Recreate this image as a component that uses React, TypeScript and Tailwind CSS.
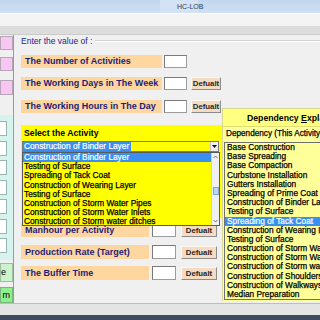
const activities = [
  'Construction of Binder Layer',
  'Testing of Surface',
  'Spreading of Tack Coat',
  'Construction of Wearing Layer',
  'Testing of Surface',
  'Construction of Storm Water Pipes',
  'Construction of Storm Water Inlets',
  'Construction of Storm water ditches',
];

const dependencies = [
  'Base Construction',
  'Base Spreading',
  'Base Compaction',
  'Curbstone Installation',
  'Gutters Installation',
  'Spreading of Prime Coat',
  'Construction of Binder Layer',
  'Testing of Surface',
  'Spreading of Tack Coat',
  'Construction of Wearing Layer',
  'Testing of Surface',
  'Construction of Storm Water Pipes',
  'Construction of Storm Water Inlets',
  'Construction of Storm water ditches',
  'Construction of Shoulders',
  'Construction of Walkways',
  'Median Preparation',
];

function TextBox({ className }: { className: string }) {
  return <div className={`${className} bg-white border border-[#9c9c9c] border-t-[#7a7a7a] border-l-[#7a7a7a]`} />;
}

function DefaultButton({ className }: { className: string }) {
  return (
    <div
      className={`${className} flex items-center justify-center bg-[#f3dcc3] border border-[#fff7ee] border-b-[#8c8c8c] border-r-[#8c8c8c] text-[7.8px] font-bold text-[#262626] leading-none`}
    >
      Defualt
    </div>
  );
}

function LabelRow({ text, hasButton = true }: { text: string; hasButton?: boolean }) {
  return (
    <div className="h-[13px] flex">
      <div className="w-[141px] bg-[#fdd6a0] pl-[4px] text-[9px] font-bold leading-[13px] text-[#1d1d77] whitespace-nowrap">
        {text}
      </div>
      <TextBox className="ml-[2px] w-[23px]" />
      {hasButton && <DefaultButton className="ml-[4px] w-[30px]" />}
    </div>
  );
}

function LowerRow({ text }: { text: string }) {
  return (
    <div className="h-[14px] flex">
      <div className="w-[128px] bg-[#fdd6a0] pl-[4px] text-[9px] font-bold leading-[14px] text-[#1d1d77] whitespace-nowrap">
        {text}
      </div>
      <TextBox className="ml-[3px] w-[24px]" />
      <DefaultButton className="ml-[5px] w-[36px] h-[13px] mt-[1px]" />
    </div>
  );
}

function LeftStrip() {
  return (
    <div className="w-[14px] border-r border-[#9a9a9a] flex flex-col">
      <div className="mt-[1px] h-[14px] w-[13px] bg-[#f7c6f3] border border-[#b7a6b7]" />
      <div className="mt-[7px] h-[14px] w-[13px] bg-[#f7c6f3] border border-[#b7a6b7]" />
      <div className="mt-[9px] h-[15px] w-[13px] bg-[#f7c6f3] border border-[#b7a6b7]" />
      <div className="mt-[20px] h-[145px] bg-[#d6f3ee] flex flex-col pt-[6px] gap-[4.5px]">
        {[0, 1, 2, 3, 4, 5, 6].map((i) => (
          <div key={i} className="h-[15px] w-[7px] bg-white border border-l-0 border-[#9cb4b0]" />
        ))}
      </div>
      <div className="mt-[3px] h-[19px] w-[13px] bg-[#cdf3cd] border border-[#9bbf9b] flex items-center justify-end overflow-hidden whitespace-nowrap text-[9px] leading-none pr-[6px]">
        e
      </div>
      <div className="mt-[5px] h-[16px] w-[13px] bg-[#8eef8e] border border-[#79b679] flex items-center justify-end overflow-hidden whitespace-nowrap text-[9px] leading-none pr-[2px]">
        m
      </div>
    </div>
  );
}

function ActivitySelect() {
  return (
    <div className="relative mt-[12px] h-[93px] bg-[#ffff00] pt-[3px]">
      <div className="pl-[3px] text-[8.7px] font-bold leading-[10px] text-black">Select the Activity</div>
      <div className="mt-[3px] ml-[1px] w-[197px] h-[11px] border border-[#7a7a7a] flex items-center">
        <div className="flex-1 h-full flex items-center">
          <span className="bg-[#3a8ff0] text-white text-[8.3px] leading-[9px] pl-[1px] pr-[2px] whitespace-nowrap [-webkit-text-stroke:0.2px_white]">
            Construction of Binder Layer
          </span>
        </div>
        <div className="w-[8px] h-full bg-[#f0f0f0] border-l border-[#c8c8c8] flex items-center justify-center">
          <svg width="5" height="3" viewBox="0 0 5 3">
            <path d="M0 0h5L2.5 3z" fill="#111" />
          </svg>
        </div>
      </div>
      <div className="absolute left-[1px] top-[27px] w-[198px] h-[74px] bg-[#ffff00] border border-[#5a5a5a] flex z-10">
        <div className="flex-1 overflow-hidden">
          {activities.map((a, i) => (
            <div
              key={i}
              className={`h-[9.2px] pl-[1px] text-[8.3px] leading-[9.2px] whitespace-nowrap ${
                i === 0
                  ? 'bg-[#3a8ff0] text-white [-webkit-text-stroke:0.2px_white]'
                  : 'text-black [-webkit-text-stroke:0.25px_black]'
              }`}
            >
              {a}
            </div>
          ))}
        </div>
        <div className="w-[8px] bg-[#eef0f2] border-l border-[#d0d0d0] flex flex-col items-center">
          <svg width="5" height="6" viewBox="0 0 5 6" className="mt-[1px]">
            <path d="M0.5 4L2.5 2L4.5 4" stroke="#777" fill="none" />
          </svg>
          <div className="mt-[27px] w-[6px] h-[8px] bg-[#bcd6f2] border border-[#7ea6d6]" />
          <div className="flex-1" />
          <svg width="5" height="6" viewBox="0 0 5 6" className="mb-[1px]">
            <path d="M0.5 2L2.5 4L4.5 2" stroke="#777" fill="none" />
          </svg>
        </div>
      </div>
    </div>
  );
}

function DependencyPanel() {
  return (
    <div className="mt-[62px] w-[98px] h-[193px] overflow-hidden bg-[#ffffa0] border-l border-t border-[#d8d890]">
      <div className="w-[160px] h-[18px] bg-[#ffff80] border-b border-[#e0e070] pl-[24px] text-[8.7px] font-bold leading-[18px] text-black whitespace-nowrap">
        Dependency <span className="underline">E</span>xplanation
      </div>
      <div className="pl-[3px] mt-[2px] text-[8.2px] leading-[10px] text-black whitespace-nowrap [-webkit-text-stroke:0.25px_black]">
        Dependency (This Activity Depends On)
      </div>
      <div className="ml-[1px] mt-[3px] w-[140px] h-[158px] bg-[#ffff99] border border-[#707070] overflow-hidden">
        {dependencies.map((d, i) => (
          <div
            key={i}
            className={`h-[9.2px] pl-[2px] text-[8.3px] leading-[9.2px] whitespace-nowrap ${
              i === 8
                ? 'bg-[#3a8ff0] text-white [-webkit-text-stroke:0.2px_white]'
                : 'text-black [-webkit-text-stroke:0.25px_black]'
            }`}
          >
            {d}
          </div>
        ))}
      </div>
    </div>
  );
}

function Form() {
  return (
    <div className="flex-1 pl-[7px] flex flex-col min-w-0">
      <div className="mt-[1px] h-[10px] flex items-center">
        <span className="text-[8.5px] leading-[10px] text-[#23238a] whitespace-nowrap">Enter the value of :</span>
        <div className="ml-[3px] flex-1 h-[2px] border-t border-[#d2d2d2] border-b border-b-white" />
      </div>
      <div className="flex">
        <div className="w-[201px] flex flex-col">
          <div className="mt-[9px]">
            <LabelRow text="The Number of Activities" hasButton={false} />
          </div>
          <div className="mt-[9px]">
            <LabelRow text="The Working Days in The Week" />
          </div>
          <div className="mt-[10px]">
            <LabelRow text="The Working Hours in The Day" />
          </div>
          <ActivitySelect />
          <div className="mt-[5px]">
            <LowerRow text="Manhour per Activity" />
          </div>
          <div className="mt-[8px]">
            <LowerRow text="Production Rate (Target)" />
          </div>
          <div className="mt-[7px]">
            <LowerRow text="The Buffer Time" />
          </div>
        </div>
        <DependencyPanel />
      </div>
    </div>
  );
}

export default function App() {
  return (
    <div className="w-[320px] h-[320px] overflow-hidden flex flex-col bg-[#f0f0f0] font-['Liberation_Sans',Arial,sans-serif] text-black">
      <div className="h-[13px] bg-gradient-to-b from-[#c2d6ee] to-[#cfe0f3] flex">
        <div className="ml-[160px] w-[38px] h-full bg-[#d3e2f4] pl-[17px] text-[7px] leading-[13px] text-[#303a48] whitespace-nowrap">
          HC-LOB
        </div>
      </div>
      <div className="h-[13px] bg-[#f4f4f4] border-t border-[#fbfdff]" />
      <div className="h-[9px] bg-[#dcdcdc] border-b border-[#cbcbcb]" />
      <div className="flex-1 flex min-h-0">
        <LeftStrip />
        <Form />
      </div>
      <div className="h-[12px] bg-[#e4e4e4] border-t border-[#bdbdbd]" />
      <div className="h-[5px] bg-[#3e4b5c]" />
    </div>
  );
}
